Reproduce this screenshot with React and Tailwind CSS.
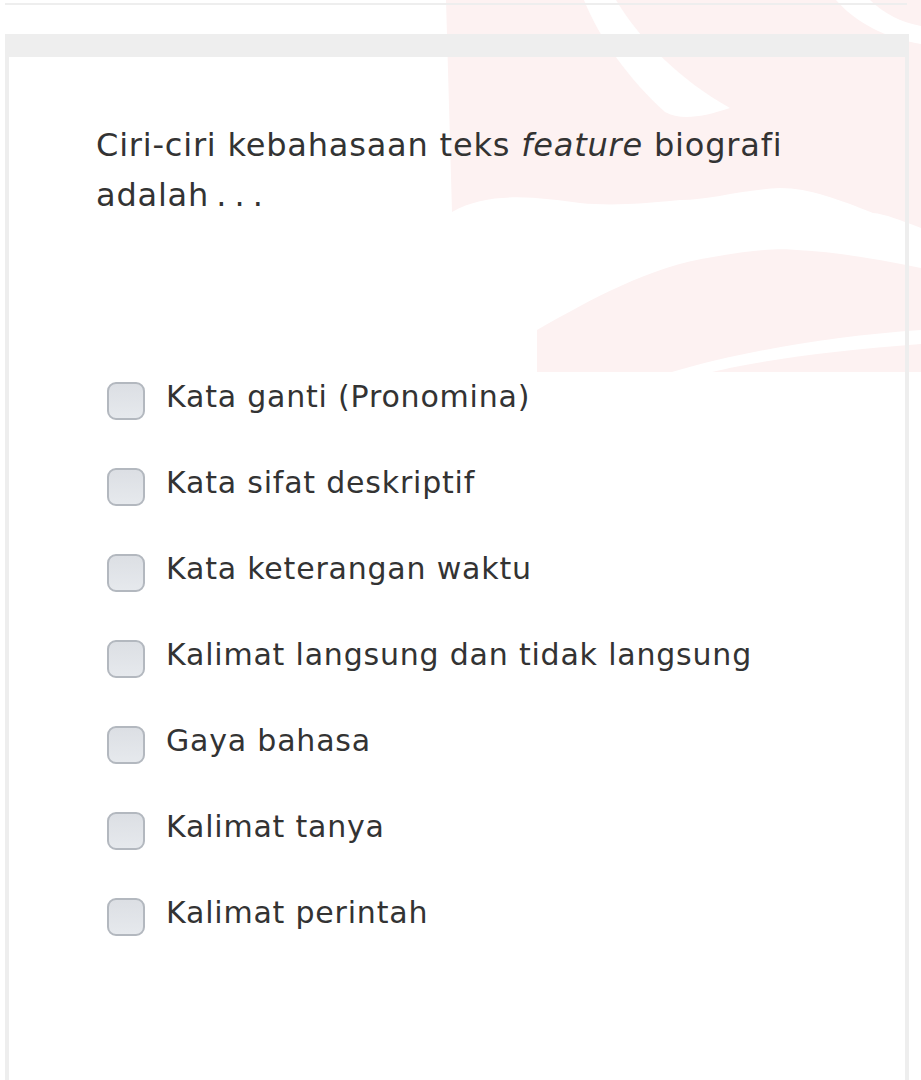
import { useState } from "react"

const options = [
    "Kata ganti (Pronomina)",
    "Kata sifat deskriptif",
    "Kata keterangan waktu",
    "Kalimat langsung dan tidak langsung",
    "Gaya bahasa",
    "Kalimat tanya",
    "Kalimat perintah",
]

function Watermark() {
    return (
        <svg
            className="absolute top-0 left-0 pointer-events-none"
            width="921"
            height="380"
            viewBox="0 0 921 380"
        >
            {/* upper petal */}
            <path
                d="M446 0 L921 0 L921 228 C900 220 885 214 873 213 C840 200 810 188 780 188 C740 190 710 200 680 200 C640 204 610 206 580 203 C540 198 490 190 452 212 Z"
                fill="#fdf2f2"
            />
            {/* white stripes crossing the petal */}
            <path
                d="M584 0 L616 0 C640 40 680 80 730 108 C700 118 680 120 665 112 C630 80 600 40 584 0 Z"
                fill="#ffffff"
            />
            <path d="M836 0 L870 0 C885 14 900 22 921 26 L921 44 C885 38 855 22 836 0 Z" fill="#ffffff" />
            {/* lower band */}
            <path
                d="M537 372 L537 330 C590 300 650 266 713 257 C750 250 780 248 797 250 C840 252 880 260 921 268 L921 372 Z"
                fill="#fdf2f2"
            />
            <path
                d="M672 372 C740 352 830 336 921 330 L921 344 C840 350 760 360 712 372 Z"
                fill="#ffffff"
            />
        </svg>
    )
}

export default function App() {
    const [checked, setChecked] = useState([])

    const toggle = (i) => {
        setChecked(checked.includes(i) ? checked.filter((c) => c !== i) : [...checked, i])
    }

    return (
        <div className="relative w-full min-h-[1080px] bg-white overflow-hidden font-['DejaVu_Sans',sans-serif] text-[#333333]">
            <Watermark />

            <div className="relative">
                <div className="ml-[5px] mt-[3px] h-[2px] w-[902px] bg-[#eeeeee]"></div>

                {/* --- QUESTION CARD --- */}
                <div className="ml-[5px] mt-[29px] w-[904px]">
                    <div className="h-[23px] bg-[#eeeeee]"></div>
                    <div className="border-x-4 border-[#eeeeee] min-h-[1040px] pl-[87px] pr-[40px] pt-[63px]">
                        <p className="max-w-[730px] text-[32px] leading-[50px] tracking-[0.8px]">
                            Ciri-ciri kebahasaan teks <em>feature</em> biografi adalah{"\u2009.\u2009.\u2009."}
                        </p>

                        <div className="mt-[162px] ml-[11px] flex flex-col gap-[48px]">
                            {options.map((opt, i) => (
                                <label key={i} className="flex items-center gap-[21px] cursor-pointer">
                                    <span
                                        onClick={() => toggle(i)}
                                        className="w-[38px] h-[38px] shrink-0 rounded-[9px] border-2 border-[#b3b8bf] bg-gradient-to-b from-[#dcdfe4] to-[#e6e9ed] flex items-center justify-center"
                                    >
                                        {checked.includes(i) && (
                                            <span className="text-[#333] text-xl leading-none">✓</span>
                                        )}
                                    </span>
                                    <span className="text-[30px] leading-[38px] -mt-[8px] tracking-[0.8px]">{opt}</span>
                                </label>
                            ))}
                        </div>
                    </div>
                </div>
            </div>
        </div>
    )
}
